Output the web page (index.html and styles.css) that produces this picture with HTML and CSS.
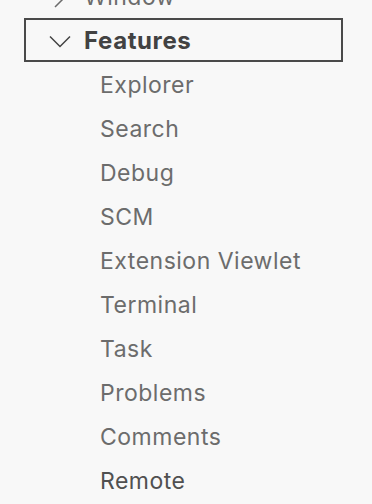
FILE: index.html
```html
<!DOCTYPE html>
<html>
<head>
<meta charset="utf-8">
<link rel="stylesheet" href="styles.css">
</head>
<body>
<div class="tree">
  <div class="row top">
    <svg class="twistie" viewBox="0 0 32 32"><path d="M11 6 L21 16 L11 26"/></svg>
    <span class="label">Window</span>
  </div>
  <div class="row top focused">
    <svg class="twistie dark" viewBox="0 0 32 32"><path d="M6 11.5 L16 21.5 L26 11.5"/></svg>
    <span class="label bold">Features</span>
  </div>
  <div class="row child"><span class="label">Explorer</span></div>
  <div class="row child"><span class="label">Search</span></div>
  <div class="row child"><span class="label">Debug</span></div>
  <div class="row child"><span class="label">SCM</span></div>
  <div class="row child"><span class="label">Extension Viewlet</span></div>
  <div class="row child"><span class="label">Terminal</span></div>
  <div class="row child"><span class="label">Task</span></div>
  <div class="row child"><span class="label">Problems</span></div>
  <div class="row child"><span class="label">Comments</span></div>
  <div class="row child hover"><span class="label">Remote</span></div>
</div>
</body>
</html>
```

FILE: styles.css
```css
html, body {
  margin: 0;
  padding: 0;
  background: #f8f8f8;
  overflow: hidden;
}
body {
  font-family: Inter, "Noto Sans", sans-serif;
  color: #6c6c6c;
}
.tree {
  margin: -26px 0 0 24px;
  width: 319px;
}
.row {
  box-sizing: border-box;
  height: 44px;
  padding-top: 3px;
  line-height: 40px;
  font-size: 23px;
  letter-spacing: 0.5px;
  display: flex;
  white-space: nowrap;
}
.row.top {
  padding-left: 20px;
}
.row.child {
  padding-left: 76px;
}
.focused {
  outline: 2px solid #4a4a4a;
  outline-offset: -2px;
}
.twistie {
  width: 32px;
  height: 32px;
  margin-top: 4px;
  margin-right: 8px;
  flex: none;
  fill: none;
  stroke: #6c6c6c;
  stroke-width: 1.5;
}
.twistie.dark {
  stroke: #424242;
}
.label.bold {
  font-weight: 700;
  font-size: 24px;
  letter-spacing: 0.6px;
  color: #424242;
}
.hover .label {
  color: #505050;
}
```
